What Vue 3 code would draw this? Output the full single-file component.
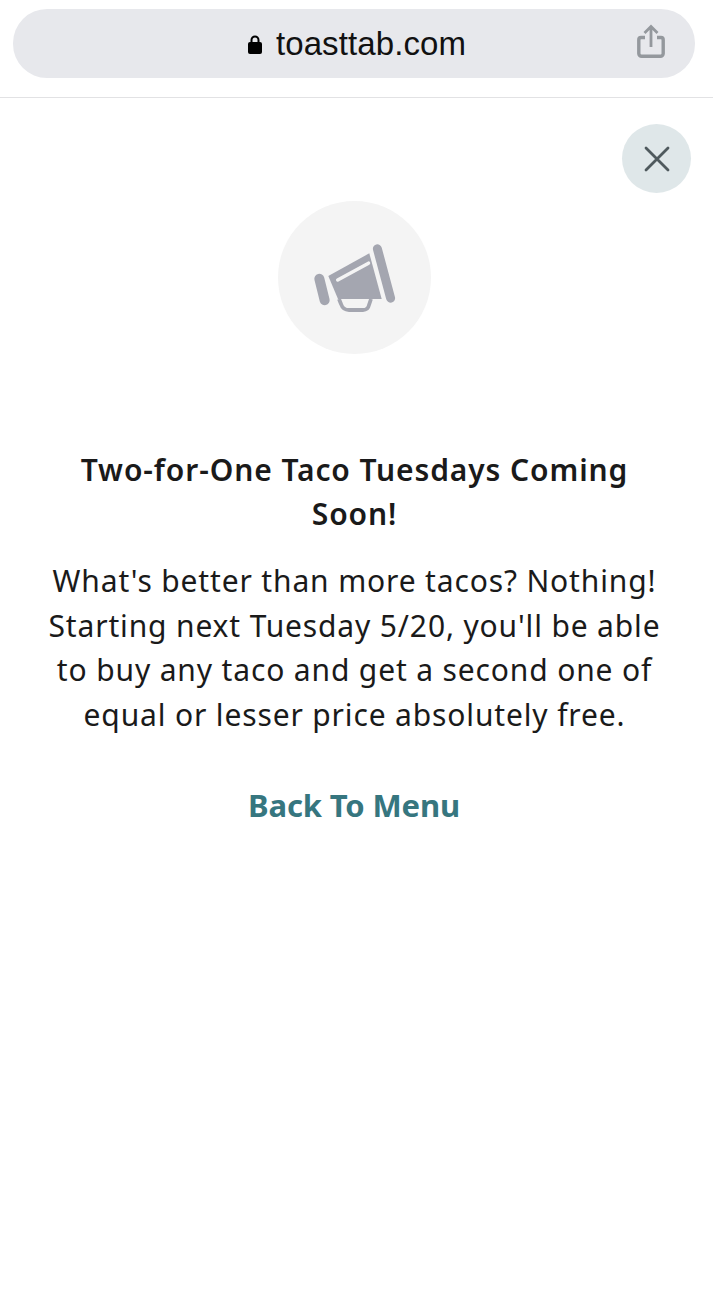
<template>
  <div class="page">
    <!-- Browser bar -->
    <header class="browser">
      <div class="url-bar">
        <div class="address">
          <svg class="lock" width="16" height="20" viewBox="0 0 16 20">
            <path d="M4.500 10V6a3.500 3.500 0 0 1 7 0v4" fill="none" stroke="#000" stroke-width="2" />
            <rect x="1" y="8" width="14" height="12" rx="2" fill="#000" />
          </svg>
          <span>toasttab.com</span>
        </div>
        <svg class="share" width="28" height="34" viewBox="0 0 28 34">
          <path d="M8 13.500H4A2.200 2.200 0 0 0 1.800 15.700V29.500A2.800 2.800 0 0 0 4.600 32.300H23.400A2.800 2.800 0 0 0 26.200 29.500V15.700A2.200 2.200 0 0 0 24 13.500H20" fill="none" stroke="#94989d" stroke-width="3.400" />
          <path d="M14 23V2.500M7.500 9L14 2.500 20.500 9" fill="none" stroke="#94989d" stroke-width="2.800" />
        </svg>
      </div>
    </header>

    <!-- Modal -->
    <main class="modal">
      <div class="close-row">
        <button class="close" aria-label="Close">
          <svg width="26" height="26" viewBox="0 0 26 26">
            <path d="M2 2L24 24M24 2L2 24" stroke="#4f5a5e" stroke-width="2.800" stroke-linecap="round" />
          </svg>
        </button>
      </div>

      <div class="badge">
        <svg width="153" height="153" viewBox="0 0 153 153">
          <rect x="-5" y="-16" width="10" height="32" rx="5" fill="#a4a6b0" transform="translate(44 88.500) rotate(-14)" />
          <rect x="-4.500" y="-30" width="9" height="60" rx="4.500" fill="#a4a6b0" transform="translate(106 72.500) rotate(-15)" />
          <path d="M50.300 75L91.300 52.300L103.700 98H60Z" fill="#a4a6b0" />
          <path d="M59.700 79L90.500 62.200" stroke="#f4f4f4" stroke-width="3.500" stroke-linecap="round" />
          <path d="M61 98L63 103Q65 109 71 109H85Q90 109 91 104L93 98" fill="none" stroke="#a4a6b0" stroke-width="3.800" />
        </svg>
      </div>

      <h1>Two-for-One Taco Tuesdays Coming Soon!</h1>
      <p>What's better than more tacos? Nothing! Starting next Tuesday 5/20, you'll be able to buy any taco and get a second one of equal or lesser price absolutely free.</p>
      <a class="back" href="#">Back To Menu</a>
    </main>
  </div>
</template>

<script setup>
</script>

<style>
html, body {
  background: #fff;
}
</style>

<style scoped>
.page {
  height: 1312px;
  overflow: hidden;
  background: #fff;
  font-family: "Noto Sans", "Open Sans", sans-serif;
  color: #1a1a1a;
}

/* Browser bar */
.browser {
  height: 88px;
  padding: 9px 18px 0 13px;
  border-bottom: 1px solid #e2e2e4;
}
.url-bar {
  position: relative;
  height: 69px;
  border-radius: 34px;
  background: #e7e8ec;
  display: flex;
  align-items: center;
  justify-content: center;
}
.address {
  display: flex;
  align-items: center;
  gap: 13px;
  margin-left: 5px;
  font-family: "Liberation Sans", Arial, sans-serif;
  font-size: 33px;
  letter-spacing: 0.1px;
  color: #111;
}
.lock { flex: none; }
.share {
  position: absolute;
  right: 30px;
  top: 15px;
}

/* Modal */
.modal {
  display: flex;
  flex-direction: column;
  align-items: center;
  padding: 26px 22px 0 18px;
}
.close-row {
  align-self: stretch;
  display: flex;
  justify-content: flex-end;
  margin-bottom: 8px;
}
.close {
  width: 69px;
  height: 69px;
  padding: 0;
  border: 0;
  border-radius: 50%;
  background: #dfe7e9;
  display: grid;
  place-items: center;
}
.badge {
  width: 153px;
  height: 153px;
  border-radius: 50%;
  background: #f4f4f4;
  margin-bottom: 94px;
}
.badge svg { display: block; }
h1 {
  margin: 0 0 23px;
  max-width: 600px;
  font-size: 30px;
  font-weight: 600;
  letter-spacing: 0.9px;
  line-height: 44px;
  text-align: center;
  color: #1a1a1a;
}
p {
  margin: 0 0 46px;
  max-width: 640px;
  font-size: 30px;
  font-weight: 400;
  letter-spacing: 0.85px;
  line-height: 44.500px;
  text-align: center;
}
.back {
  margin-left: -1px;
  font-size: 31px;
  font-weight: 700;
  letter-spacing: -0.15px;
  line-height: 44px;
  color: #36767f;
  text-decoration: none;
}
</style>
